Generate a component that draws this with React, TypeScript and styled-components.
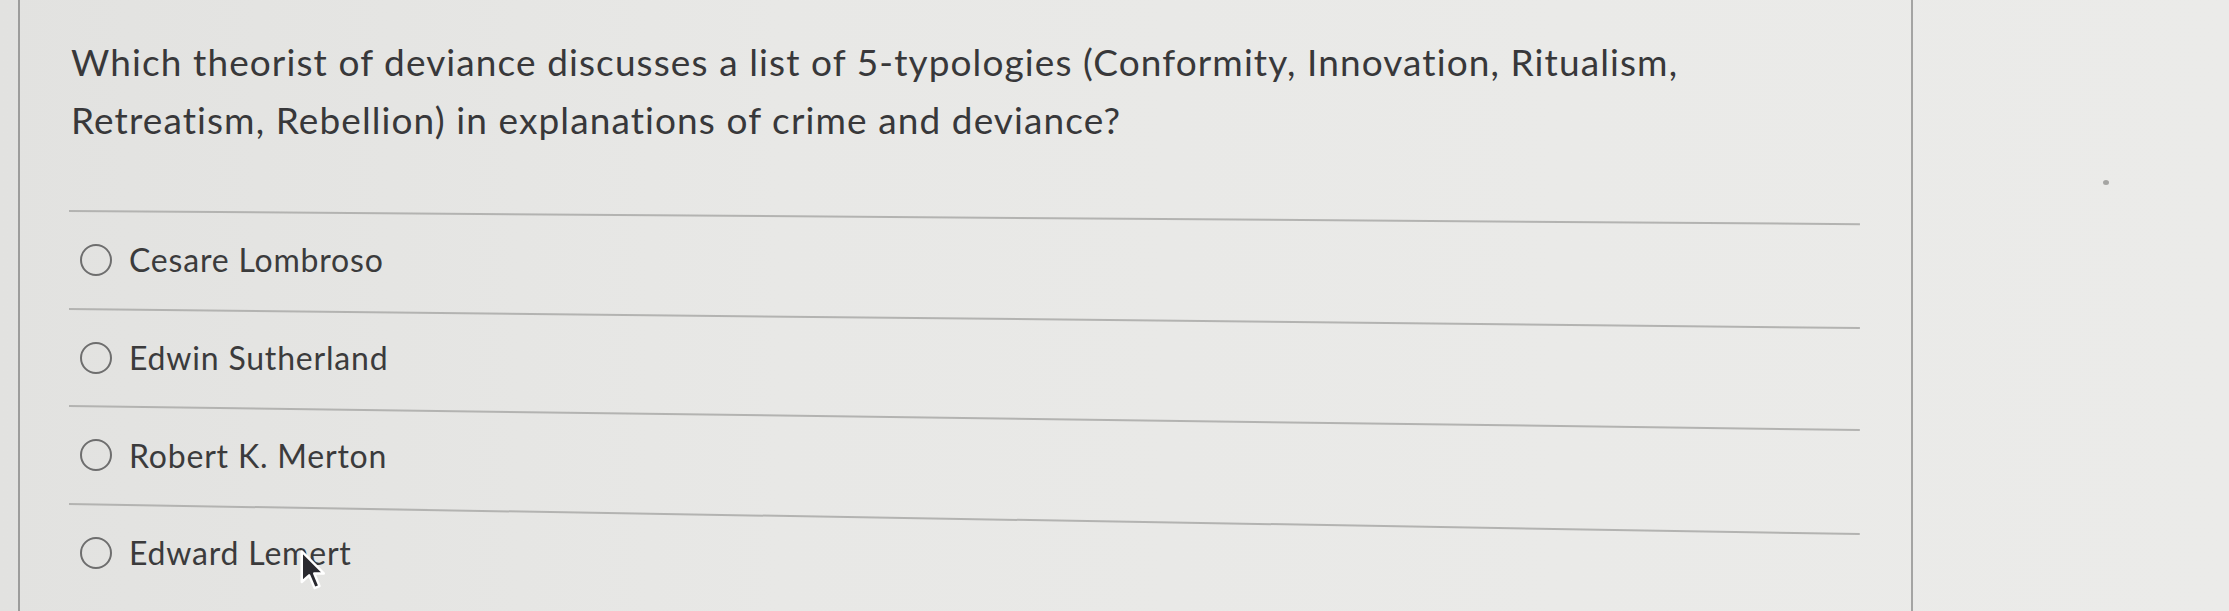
import styled, { createGlobalStyle } from 'styled-components'

const GlobalStyle = createGlobalStyle`
  html, body {
    margin: 0;
    padding: 0;
  }

  body {
    background: linear-gradient(90deg, #e2e2e0 0%, #e8e8e6 35%, #eaeae8 70%, #ebebe9 100%);
    font-family: Lato, 'Open Sans', sans-serif;
    overflow: hidden;
  }
`

const Page = styled.div`
  position: relative;
  display: flex;
  width: 2229px;
  height: 611px;
`

const Gutter = styled.div`
  width: 18px;
  flex-shrink: 0;
`

const Panel = styled.main`
  width: 1895px;
  flex-shrink: 0;
  border-left: 2px solid #9c9c9b;
  border-right: 2px solid #a4a4a3;
  padding: 33px 55px 0 49px;
  box-sizing: border-box;
`

const SidePanel = styled.aside`
  position: relative;
  flex: 1;
`

const Speck = styled.span`
  position: absolute;
  left: 190px;
  top: 180px;
  width: 6px;
  height: 5px;
  border-radius: 50%;
  background: #a5a5a3;
`

const Question = styled.p`
  margin: 0 0 61px 2px;
  font-size: 37px;
  line-height: 58px;
  letter-spacing: 1.1px;
  color: #38383a;
  white-space: nowrap;
`

const Choices = styled.div`
  display: flex;
  flex-direction: column;
`

const Divider = styled.hr<{ $tilt: number }>`
  margin: 0;
  width: 1791px;
  height: 2px;
  border: none;
  background: #b3b3b1;
  transform-origin: 0 50%;
  transform: rotate(${(p) => p.$tilt}deg);
`

const Choice = styled.label`
  display: flex;
  align-items: center;
  gap: 17px;
  height: 95.7px;
  padding-left: 11px;
  font-size: 32px;
  letter-spacing: 0.8px;
  color: #3b3b3c;
  cursor: pointer;
`

const Radio = styled.input`
  appearance: none;
  margin: 0;
  width: 32px;
  height: 32px;
  border: 2px solid #6e6e6e;
  border-radius: 50%;
  box-sizing: border-box;
  background: transparent;
  flex-shrink: 0;
`

const Pointer = styled.svg`
  position: absolute;
  left: 299px;
  top: 549px;
  pointer-events: none;
`

const answers = [
  { name: 'Cesare Lombroso', tilt: 0.42 },
  { name: 'Edwin Sutherland', tilt: 0.61 },
  { name: 'Robert K. Merton', tilt: 0.77 },
  { name: 'Edward Lemert', tilt: 0.96 },
]

export default function App() {
  return (
    <>
      <GlobalStyle />
      <Page>
        <Gutter />
        <Panel>
          <Question>
            Which theorist of deviance discusses a list of 5-typologies (Conformity, Innovation, Ritualism,
            <br />
            Retreatism, Rebellion) in explanations of crime and deviance?
          </Question>
          <Choices>
            {answers.map((a) => (
              <div key={a.name}>
                <Divider $tilt={a.tilt} />
                <Choice>
                  <Radio type="radio" name="theorist" />
                  {a.name}
                </Choice>
              </div>
            ))}
          </Choices>
        </Panel>
        <SidePanel>
          <Speck />
        </SidePanel>
        <Pointer width="30" height="44" viewBox="0 0 24 36">
          <path
            d="M2 2 L2 27 L8 21.5 L12.5 32 L16.5 30.3 L12.2 20 L20 20 Z"
            fill="#2a2a30"
            stroke="#ffffff"
            strokeWidth="2"
            strokeLinejoin="round"
          />
        </Pointer>
      </Page>
    </>
  )
}
